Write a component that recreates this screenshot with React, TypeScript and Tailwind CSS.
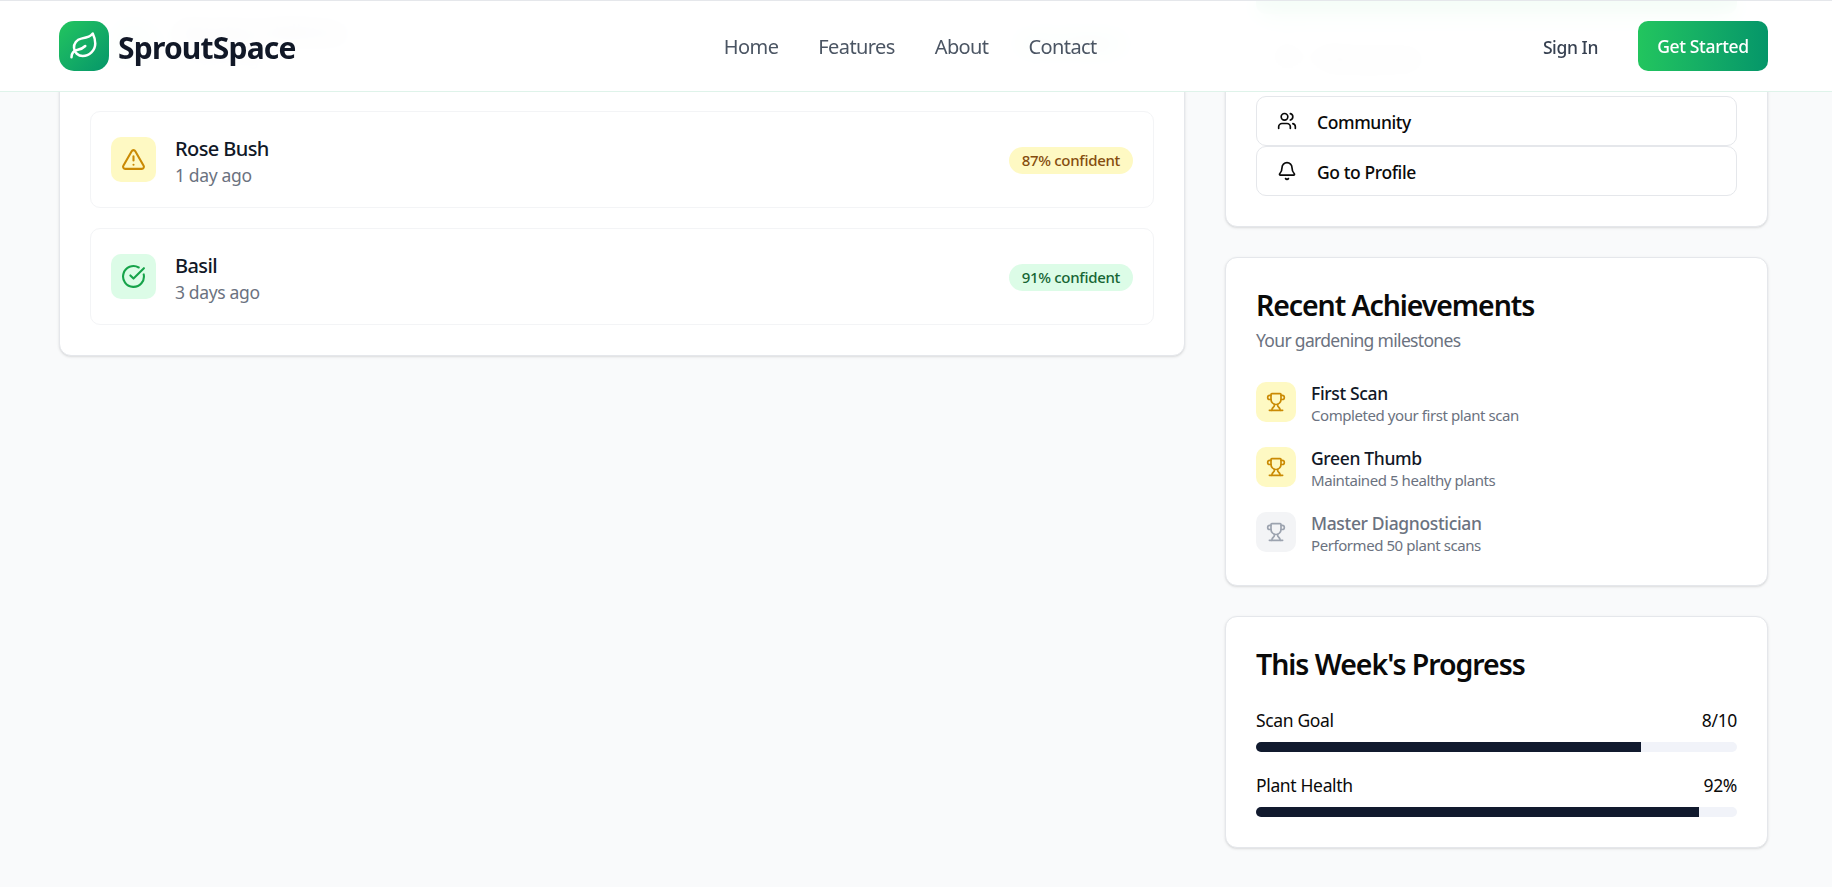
import { Leaf, TriangleAlert, CircleCheckBig, Users, Bell, Trophy, BookOpen, Camera } from "lucide-react";

const font = { fontFamily: '"Noto Sans", "Open Sans", Arial, sans-serif' };

function ScanRow({ name, time, conf, tone }: { name: string; time: string; conf: string; tone: "green" | "yellow" }) {
  const yellow = tone === "yellow";
  return (
    <div className="flex items-center justify-between rounded-[10px] border border-[#f3f4f6] bg-white p-5 h-[97px]">
      <div className="flex items-center gap-[19px]">
        <div className={`flex h-[45px] w-[45px] items-center justify-center rounded-[10px] ${yellow ? "bg-[#fef9c3]" : "bg-[#dcfce7]"}`}>
          {yellow ? <TriangleAlert className="h-[25px] w-[25px] text-[#ca8a04]" /> : <CircleCheckBig className="h-[25px] w-[25px] text-[#16a34a]" />}
        </div>
        <div className="mt-[3px]">
          <div className="text-[20px] leading-[29px] font-medium text-[#111827] tracking-[-0.6px]">{name}</div>
          <div className="text-[17.5px] leading-[25px] text-[#6b7280] tracking-[-0.35px]">{time}</div>
        </div>
      </div>
      <span className={`mt-[2px] flex h-[27px] items-center rounded-full px-[13px] text-[15px] font-medium tracking-[-0.3px] ${yellow ? "bg-[#fef9c3] text-[#854d0e]" : "bg-[#dcfce7] text-[#166534]"}`}>{conf}</span>
    </div>
  );
}

function Achievement({ title, sub, done }: { title: string; sub: string; done: boolean }) {
  return (
    <div className="flex items-start gap-[15px]">
      <div className={`flex h-10 w-10 items-center justify-center rounded-[10px] ${done ? "bg-[#fef9c3]" : "bg-[#f3f4f6]"}`}>
        <Trophy className={`h-5 w-5 ${done ? "text-[#ca8a04]" : "text-[#9ca3af]"}`} />
      </div>
      <div>
        <div className={`text-[17.5px] leading-[23px] font-medium tracking-[-0.35px] ${done ? "text-[#111827]" : "text-[#6b7280]"}`}>{title}</div>
        <div className="text-[15px] leading-[20px] text-[#6b7280] tracking-[-0.43px]">{sub}</div>
      </div>
    </div>
  );
}

function Progress({ label, value, pct }: { label: string; value: string; pct: number }) {
  return (
    <div>
      <div className="mb-[8px] flex justify-between text-[17.5px] leading-[27px] text-[#0a0a0a] tracking-[-0.35px]">
        <span>{label}</span>
        <span>{value}</span>
      </div>
      <div className="h-[10px] overflow-hidden rounded-full bg-[#f1f3f9]">
        <div className="h-full bg-[#111a2e]" style={{ width: `${pct}%` }} />
      </div>
    </div>
  );
}

function ActionButton({ icon, label, extra }: { icon: React.ReactNode; label: string; extra?: string }) {
  return (
    <button className={`flex h-[50px] w-full items-center gap-5 rounded-[10px] border border-[#e5e7eb] bg-white px-5 text-[17.5px] font-medium text-[#0a0a0a] tracking-[-0.4px] ${extra ?? ""}`}>
      {icon}
      <span className="pt-[2px]">{label}</span>
    </button>
  );
}

export default function App() {
  const card = "rounded-[12px] border border-[#e5e7eb] bg-white p-[30px] shadow-sm";
  return (
    <div className="relative h-[887px] overflow-hidden bg-[#f9fafb]" style={font}>
      <header className="absolute inset-x-0 top-0 z-10 flex h-[92px] items-center justify-between border-y border-t-[#e5e7eb] border-b-[#dff3ea] bg-white/95 pl-[59px] pr-[64px] backdrop-blur-md">
        <div className="flex items-center gap-[9px]">
          <div className="flex h-[50px] w-[50px] items-center justify-center rounded-[15px] bg-gradient-to-br from-[#22c55e] to-[#059669]">
            <Leaf className="h-[30px] w-[30px] text-white" />
          </div>
          <span className="pt-[2px] text-[30px] font-bold text-[#111827] tracking-[-0.8px]">SproutSpace</span>
        </div>
        <nav className="mr-[18px] flex items-center gap-10 pt-[2px] text-[20px] text-[#4b5563] tracking-[-0.6px]">
          <span>Home</span>
          <span>Features</span>
          <span>About</span>
          <span>Contact</span>
        </nav>
        <div className="flex items-center gap-10">
          <span className="pt-[2px] text-[17.5px] font-medium text-[#374151] tracking-[-0.4px]">Sign In</span>
          <button className="flex h-[50px] w-[130px] items-center justify-center rounded-[10px] bg-gradient-to-r from-[#22c55e] to-[#059669] text-[17.5px] font-medium text-white tracking-[-0.35px]">Get Started</button>
        </div>
      </header>

      <main className="-mt-[103px] grid grid-cols-3 items-start gap-10 pl-[59px] pr-[64px]">
        <section className={`col-span-2 ${card}`}>
          <div className="h-[66px]">
            <div className="text-[30px] leading-[36px] font-semibold">Recent Scans</div>
            <div className="text-[17.5px] text-[#6b7280]">Your latest plant checks</div>
          </div>
          <div className="flex flex-col gap-5">
            <ScanRow name="Monstera Deliciosa" time="2 hours ago" conf="95% confident" tone="green" />
            <ScanRow name="Rose Bush" time="1 day ago" conf="87% confident" tone="yellow" />
            <ScanRow name="Basil" time="3 days ago" conf="91% confident" tone="green" />
          </div>
        </section>

        <aside className="flex flex-col gap-[30px]">
          <section className={card}>
            <div className="h-9 text-[30px] leading-[36px] font-semibold">Quick Actions</div>
            <button className="mb-[18px] flex h-[50px] w-full items-center gap-5 rounded-[10px] bg-[#22c55e] px-5 text-[17.5px] font-medium text-white">
              <Camera className="h-5 w-5" />
              Scan Plant
            </button>
            <ActionButton icon={<BookOpen className="h-5 w-5" />} label="Plant Journal" extra="mb-[14px]" />
            <ActionButton icon={<Users className="h-5 w-5" />} label="Community" />
            <ActionButton icon={<Bell className="h-5 w-5" />} label="Go to Profile" />
          </section>

          <section className={card}>
            <h2 className="text-[28.5px] leading-[34px] font-semibold text-[#0a0a0a] tracking-[-1.1px]">Recent Achievements</h2>
            <p className="mt-[6px] text-[17.5px] leading-[25px] text-[#6b7280] tracking-[-0.68px]">Your gardening milestones</p>
            <div className="mt-[29px] flex flex-col gap-[22px]">
              <Achievement title="First Scan" sub="Completed your first plant scan" done />
              <Achievement title="Green Thumb" sub="Maintained 5 healthy plants" done />
              <Achievement title="Master Diagnostician" sub="Performed 50 plant scans" done={false} />
            </div>
          </section>

          <section className={card}>
            <h2 className="text-[28.5px] leading-[34px] font-semibold text-[#0a0a0a] tracking-[-1.05px]">This Week's Progress</h2>
            <div className="mt-[26px] flex flex-col gap-5">
              <Progress label="Scan Goal" value="8/10" pct={80} />
              <Progress label="Plant Health" value="92%" pct={92} />
            </div>
          </section>
        </aside>
      </main>
    </div>
  );
}
